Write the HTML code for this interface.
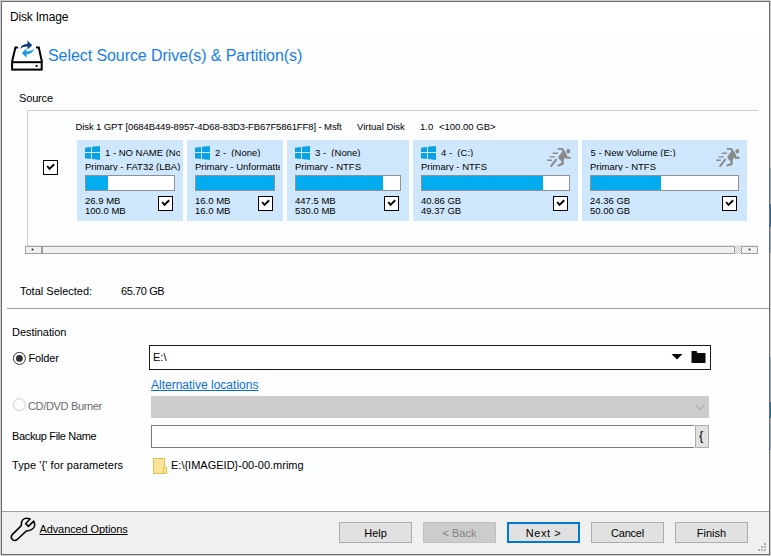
<!DOCTYPE html>
<html><head><meta charset="utf-8">
<style>
html,body{margin:0;padding:0;}
body{width:771px;height:556px;position:relative;overflow:hidden;background:#cfcfcf;font-family:"Liberation Sans",sans-serif;color:#000;}
.a{position:absolute;}
.t{position:absolute;white-space:pre;line-height:1;font-family:"Liberation Sans",sans-serif;}
.f11{font-size:11px;}
.f95{font-size:9.5px;}
.card{position:absolute;top:140px;height:81px;background:#cfe7fc;overflow:hidden;}
.bar{position:absolute;top:35px;height:14px;border:1px solid #8e9294;background:#fff;}
.bar i{position:absolute;left:0;top:0;bottom:0;background:#02acee;}
.cb{position:absolute;width:13px;height:13px;border:1px solid #000;background:#fff;}
.cb svg{position:absolute;left:0;top:0;}
.btn{position:absolute;top:522px;width:71px;height:19px;border:1px solid #adadad;background:#e1e1e1;}
.btn span{position:absolute;left:0;right:0;top:5px;text-align:center;font-size:11px;line-height:11px;}
</style></head><body>
<!-- window frame -->
<div class="a" style="left:770px;top:168px;width:1px;height:85px;background:#9aabbf;"></div>
<div class="a" style="left:770px;top:204px;width:1px;height:23px;background:#1b6fa6;"></div>
<div class="a" style="left:770px;top:357px;width:1px;height:93px;background:#9aabbf;"></div>
<div class="a" style="left:770px;top:402px;width:1px;height:16px;background:#1b6fa6;"></div>
<div class="a" style="left:1px;top:1px;width:769px;height:554px;background:#6b6b6b;"></div>
<div class="a" style="left:2px;top:2px;width:767px;height:552px;background:#fcfdfe;"></div>
<div class="a" style="left:2px;top:2px;width:767px;height:30px;background:#ffffff;"></div>
<div class="t" style="left:10px;top:11px;font-size:12px;letter-spacing:-0.19px;">Disk Image</div>

<!-- header icon -->
<svg class="a" style="left:0;top:0" width="60" height="80" viewBox="0 0 60 80">
 <rect x="12.1" y="62.2" width="29.6" height="7.4" fill="#fff" stroke="#000" stroke-width="2"/>
 <path d="M18,47.6 L15.4,47.6 L12,62 M36,47.6 L38.8,47.6 L42,62" fill="none" stroke="#000" stroke-width="2"/>
 <circle cx="36.6" cy="65.9" r="1.1" fill="#000"/>
 <path d="M20.0,49.0 C21.0,45.5 23.5,44.0 27.4,44.0 L27.4,40.5 L32.2,45.2 L27.6,49.6 L27.6,46.6 C24.5,46.6 22.2,47.3 20.0,49.0 Z" fill="#0b3f7f"/>
 <path d="M34.0,48.8 C33.0,52.5 30.5,54.0 26.6,54.0 L26.6,57.8 L21.8,53.1 L26.4,48.6 L26.4,51.4 C29.5,51.4 31.8,50.6 34.0,48.8 Z" fill="#1a9be3"/>
</svg>
<div class="t" style="left:48px;top:47.5px;font-size:16px;letter-spacing:-0.075px;color:#1a7de6;">Select Source Drive(s) &amp; Partition(s)</div>

<div class="t f11" style="left:19px;top:93.4px;letter-spacing:-0.16px;">Source</div>

<!-- source panel -->
<div class="a" style="left:27px;top:110px;width:731px;height:1px;background:#cdcdcd;"></div>
<div class="a" style="left:27px;top:110px;width:1px;height:136px;background:#cdcdcd;"></div>
<div class="t f95" style="left:75.5px;top:121.7px;letter-spacing:-0.1px;">Disk 1 GPT [0684B449-8957-4D68-83D3-FB67F5861FF8] - Msft</div>
<div class="t f95" style="left:357px;top:121.7px;">Virtual Disk</div>
<div class="t f95" style="left:420px;top:121.7px;">1.0</div>
<div class="t f95" style="left:439px;top:121.7px;">&lt;100.00 GB&gt;</div>

<div class="cb" style="left:43px;top:160px;"><svg width="13" height="13"><path d="M3.2,5 L5.5,7.9 L10.2,3.3" fill="none" stroke="#000" stroke-width="1.9"/></svg></div>

<div class="card" style="left:77px;width:106px;"><svg class="a" style="left:8px;top:6px" width="15" height="14"><path d="M0,1.8 L6,0.9 L6,6 L0,6 Z M7,0.8 L15,0 L15,6 L7,6 Z M0,7 L6,7 L6,13.1 L0,12.3 Z M7,7 L15,7 L15,14 L7,13.1 Z" fill="#0aa2e5"/></svg><div class="t f95" style="left:28px;top:7.7px;width:75.0px;overflow:hidden;">1 - NO NAME (None)</div><div class="t f95" style="left:8px;top:21.8px;width:95px;overflow:hidden;">Primary - FAT32 (LBA)</div><div class="bar" style="left:8px;width:88px;"><i style="width:22px"></i></div><div class="t f95" style="left:8px;top:55.8px;">26.9 MB</div><div class="t f95" style="left:8px;top:65.5px;">100.0 MB</div><div class="cb" style="left:81px;top:56px;"><svg width="13" height="13"><path d="M3.2,5 L5.5,7.9 L10.2,3.3" fill="none" stroke="#000" stroke-width="1.9"/></svg></div></div>
<div class="card" style="left:187px;width:96px;"><svg class="a" style="left:8px;top:6px" width="15" height="14"><path d="M0,1.8 L6,0.9 L6,6 L0,6 Z M7,0.8 L15,0 L15,6 L7,6 Z M0,7 L6,7 L6,13.1 L0,12.3 Z M7,7 L15,7 L15,14 L7,13.1 Z" fill="#0aa2e5"/></svg><div class="t f95" style="left:28px;top:7.7px;width:65.0px;overflow:hidden;">2 -  (None)</div><div class="t f95" style="left:8px;top:21.8px;width:85px;overflow:hidden;">Primary - Unformatted</div><div class="bar" style="left:8px;width:78px;"><i style="width:78px"></i></div><div class="t f95" style="left:8px;top:55.8px;">16.0 MB</div><div class="t f95" style="left:8px;top:65.5px;">16.0 MB</div><div class="cb" style="left:71px;top:56px;"><svg width="13" height="13"><path d="M3.2,5 L5.5,7.9 L10.2,3.3" fill="none" stroke="#000" stroke-width="1.9"/></svg></div></div>
<div class="card" style="left:287px;width:122px;"><svg class="a" style="left:8px;top:6px" width="15" height="14"><path d="M0,1.8 L6,0.9 L6,6 L0,6 Z M7,0.8 L15,0 L15,6 L7,6 Z M0,7 L6,7 L6,13.1 L0,12.3 Z M7,7 L15,7 L15,14 L7,13.1 Z" fill="#0aa2e5"/></svg><div class="t f95" style="left:28px;top:7.7px;width:91.0px;overflow:hidden;">3 -  (None)</div><div class="t f95" style="left:8px;top:21.8px;width:111px;overflow:hidden;">Primary - NTFS</div><div class="bar" style="left:8px;width:104px;"><i style="width:87px"></i></div><div class="t f95" style="left:8px;top:55.8px;">447.5 MB</div><div class="t f95" style="left:8px;top:65.5px;">530.0 MB</div><div class="cb" style="left:97px;top:56px;"><svg width="13" height="13"><path d="M3.2,5 L5.5,7.9 L10.2,3.3" fill="none" stroke="#000" stroke-width="1.9"/></svg></div></div>
<div class="card" style="left:413px;width:165px;"><svg class="a" style="left:8px;top:6px" width="15" height="14"><path d="M0,1.8 L6,0.9 L6,6 L0,6 Z M7,0.8 L15,0 L15,6 L7,6 Z M0,7 L6,7 L6,13.1 L0,12.3 Z M7,7 L15,7 L15,14 L7,13.1 Z" fill="#0aa2e5"/></svg><svg class="a" style="left:134px;top:7px" width="25" height="21" viewBox="0 0 25 21"><path d="M10.9,1.0 L15.7,1.0 L19.6,7.1 L20.4,9.4 L23.7,10.1 L23.7,11.8 L19.1,11.8 L17.8,10.5 L16.6,13.5 L17.0,16.6 L15.7,18.3 L10.9,19.6 L10.1,18.3 L14.4,16.1 L14.6,14.4 L11.8,11.8 L11.4,9.6 L15.3,4.5 L14.6,2.7 L10.9,2.7 Z" fill="#8a8a8a"/><ellipse cx="21.3" cy="4.3" rx="1.9" ry="2.2" fill="#8a8a8a"/><g stroke="#8a8a8a" fill="none"><path d="M9.6,12.2 L3.6,19.6" stroke-width="2"/><path d="M5.8,6.2 L10.9,6.2 M2.7,9.9 L7.9,9.9 M0.2,13.3 L4.9,13.3" stroke-width="1.4"/></g></svg><div class="t f95" style="left:28px;top:7.7px;width:134.0px;overflow:hidden;">4 -  (C:)</div><div class="t f95" style="left:8px;top:21.8px;width:154px;overflow:hidden;">Primary - NTFS</div><div class="bar" style="left:8px;width:147px;"><i style="width:121px"></i></div><div class="t f95" style="left:8px;top:55.8px;">40.86 GB</div><div class="t f95" style="left:8px;top:65.5px;">49.37 GB</div><div class="cb" style="left:140px;top:56px;"><svg width="13" height="13"><path d="M3.2,5 L5.5,7.9 L10.2,3.3" fill="none" stroke="#000" stroke-width="1.9"/></svg></div></div>
<div class="card" style="left:582px;width:165px;"><svg class="a" style="left:134px;top:7px" width="25" height="21" viewBox="0 0 25 21"><path d="M10.9,1.0 L15.7,1.0 L19.6,7.1 L20.4,9.4 L23.7,10.1 L23.7,11.8 L19.1,11.8 L17.8,10.5 L16.6,13.5 L17.0,16.6 L15.7,18.3 L10.9,19.6 L10.1,18.3 L14.4,16.1 L14.6,14.4 L11.8,11.8 L11.4,9.6 L15.3,4.5 L14.6,2.7 L10.9,2.7 Z" fill="#8a8a8a"/><ellipse cx="21.3" cy="4.3" rx="1.9" ry="2.2" fill="#8a8a8a"/><g stroke="#8a8a8a" fill="none"><path d="M9.6,12.2 L3.6,19.6" stroke-width="2"/><path d="M5.8,6.2 L10.9,6.2 M2.7,9.9 L7.9,9.9 M0.2,13.3 L4.9,13.3" stroke-width="1.4"/></g></svg><div class="t f95" style="left:8.6px;top:7.7px;width:153.4px;overflow:hidden;">5 - New Volume (E:)</div><div class="t f95" style="left:8px;top:21.8px;width:154px;overflow:hidden;">Primary - NTFS</div><div class="bar" style="left:8px;width:147px;"><i style="width:70px"></i></div><div class="t f95" style="left:8px;top:55.8px;">24.36 GB</div><div class="t f95" style="left:8px;top:65.5px;">50.00 GB</div><div class="cb" style="left:140px;top:56px;"><svg width="13" height="13"><path d="M3.2,5 L5.5,7.9 L10.2,3.3" fill="none" stroke="#000" stroke-width="1.9"/></svg></div></div>

<!-- scrollbar -->
<div class="a" style="left:28px;top:245px;width:730px;height:1px;background:#e8e8e8;"></div>
<div class="a" style="left:25px;top:246px;width:733px;height:8px;background:#a0a0a0;"></div>
<div class="a" style="left:26px;top:247px;width:15px;height:6px;background:#f0f0f0;"></div>
<div class="a" style="left:32px;top:249px;width:1px;height:1px;background:#000;box-shadow:0 0 0 0.5px #777;"></div>
<div class="a" style="left:43px;top:247px;width:691px;height:6px;background:#f0f0f0;"></div>
<div class="a" style="left:735px;top:246px;width:6px;height:8px;background:repeating-conic-gradient(#c8c8c8 0 25%,#f4f4f4 0 50%) 0 0/2px 2px;"></div>
<div class="a" style="left:742px;top:247px;width:15px;height:6px;background:#f0f0f0;"></div>
<div class="a" style="left:749px;top:249px;width:1px;height:1px;background:#000;box-shadow:0 0 0 0.5px #777;"></div>

<div class="t f11" style="left:20px;top:285.6px;">Total Selected:</div>
<div class="t f11" style="left:121px;top:285.6px;letter-spacing:-0.4px;">65.70 GB</div>
<div class="a" style="left:7px;top:308px;width:762px;height:1px;background:#a0a0a0;"></div>

<div class="t f11" style="left:12px;top:327.4px;letter-spacing:-0.06px;">Destination</div>
<!-- radio folder -->
<svg class="a" style="left:12px;top:352px" width="14" height="14"><circle cx="7.4" cy="6.4" r="6" fill="#fff" stroke="#333" stroke-width="1"/><circle cx="7.4" cy="6.4" r="3.4" fill="#333"/></svg>
<div class="t f11" style="left:28.5px;top:353px;letter-spacing:-0.16px;">Folder</div>
<div class="a" style="left:149px;top:345px;width:560px;height:23px;border:1px solid #1a1a1a;background:#fff;"></div>
<div class="t f11" style="left:153px;top:351.6px;">E:\</div>
<svg class="a" style="left:670px;top:352px" width="14" height="8"><path d="M1.5,2 L12.5,2 L7,7.5 Z" fill="#000"/></svg>
<svg class="a" style="left:690px;top:350px" width="17" height="14"><path d="M1.5,1 L6.5,1 L7.5,3 L15.5,3 L15.5,13 L1.5,13 Z" fill="#0a0a0a"/></svg>

<div class="t f11" style="left:151px;top:379.3px;font-size:12px;color:#0b6fd6;text-decoration:underline;text-decoration-skip-ink:none;">Alternative locations</div>

<svg class="a" style="left:12px;top:398px" width="14" height="14"><circle cx="7.4" cy="6.6" r="6" fill="#fcfdfe" stroke="#cccccc" stroke-width="1"/></svg>
<div class="t f11" style="left:28px;top:400.5px;color:#6d6d6d;letter-spacing:-0.33px;">CD/DVD Burner</div>
<div class="a" style="left:151px;top:396px;width:558px;height:22px;background:#cccccc;"></div>
<svg class="a" style="left:694px;top:403px" width="12" height="9"><path d="M1.5,1.5 L6,6.5 L10.5,1.5" fill="none" stroke="#a0a0a0" stroke-width="1"/></svg>

<div class="t f11" style="left:12px;top:431.4px;letter-spacing:-0.35px;">Backup File Name</div>
<div class="a" style="left:151px;top:425px;width:542px;height:21px;border:1px solid #7a7a7a;border-right:none;background:#fff;"></div>
<div class="a" style="left:695px;top:425px;width:12px;height:21px;border:1px solid #adadad;background:#e1e1e1;"></div>
<div class="t" style="left:699px;top:429px;font-size:13px;">{</div>

<div class="t f11" style="left:12px;top:460.4px;letter-spacing:0.08px;">Type '{' for parameters</div>
<svg class="a" style="left:152px;top:457px" width="16" height="18"><rect x="1.5" y="1.5" width="11" height="15" fill="#fbe39a" stroke="#e6c04a"/><rect x="11.5" y="10.5" width="3" height="6" fill="#fbe39a" stroke="#e6c04a"/></svg>
<div class="t f11" style="left:171px;top:459.8px;">E:\{IMAGEID}-00-00.mrimg</div>

<!-- bottom bar -->
<div class="a" style="left:2px;top:511px;width:767px;height:1px;background:#a0a0a0;"></div>
<div class="a" style="left:2px;top:512px;width:767px;height:42px;background:#f0f0f0;"></div>
<svg class="a" style="left:9px;top:515px" width="28" height="28" viewBox="0 0 28 28"><path d="M3,19.9 L12.3,10.6 C12,8 12.6,6 13.8,4.8 C15.5,3.2 18.5,3 21.1,4 L16.6,8.7 L19.4,11.4 L24.7,6.1 C25.9,8.5 26,11 24.6,12.9 C23.3,14.6 21.5,15.6 17.4,15.9 L8,24.7 A3.5,3.5 0 0 1 3,19.9 Z" fill="none" stroke="#000" stroke-width="1.5" stroke-linejoin="round"/></svg>
<div class="t f11" style="left:39.5px;top:524.2px;letter-spacing:-0.11px;text-decoration:underline;text-decoration-skip-ink:none;">Advanced Options</div>

<div class="btn" style="left:339px;"><span>Help</span></div>
<div class="btn" style="left:423px;background:#cccccc;border-color:#bfbfbf;"><span style="color:#838383;">&lt; Back</span></div>
<div class="btn" style="left:507px;width:69px;height:17px;border:2px solid #0078d7;"><span style="top:4px;letter-spacing:0.6px;">Next &gt;</span></div>
<div class="btn" style="left:591px;"><span style="letter-spacing:-0.2px;">Cancel</span></div>
<div class="btn" style="left:675px;"><span>Finish</span></div>

<!-- size grip -->
<div class="a" style="left:764px;top:543px;width:2px;height:2px;background:#b0b0b0;"></div>
<div class="a" style="left:761px;top:546px;width:2px;height:2px;background:#b0b0b0;"></div>
<div class="a" style="left:764px;top:546px;width:2px;height:2px;background:#b0b0b0;"></div>
<div class="a" style="left:758px;top:549px;width:2px;height:2px;background:#b0b0b0;"></div>
<div class="a" style="left:761px;top:549px;width:2px;height:2px;background:#b0b0b0;"></div>
<div class="a" style="left:764px;top:549px;width:2px;height:2px;background:#b0b0b0;"></div>

</body></html>
